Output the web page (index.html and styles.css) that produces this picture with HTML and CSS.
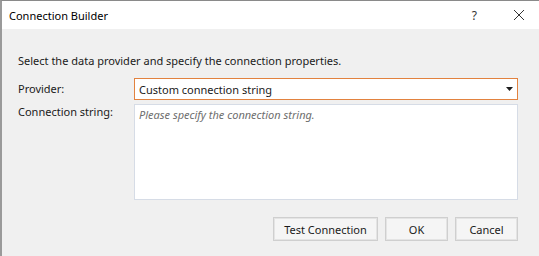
FILE: index.html
```html
<!DOCTYPE html>
<html>
<head>
<meta charset="utf-8">
<title>Connection Builder</title>
<link rel="stylesheet" href="styles.css">
</head>
<body>
<div class="window">
  <div class="titlebar">
    <span class="title">Connection Builder</span>
    <div class="controls">
      <span class="help">?</span>
      <svg class="close" width="12" height="12" viewBox="0 0 12 12"><path d="M1 1 L11 11 M11 1 L1 11" stroke="#333" stroke-width="1" fill="none"/></svg>
    </div>
  </div>
  <div class="content">
    <p class="intro">Select the data provider and specify the connection properties.</p>
    <div class="form">
      <label class="label label-provider">Provider:</label>
      <div class="combo">
        <span class="combo-text">Custom connection string</span>
        <svg class="arrow" width="7" height="4" viewBox="0 0 7 4"><path d="M0 0 H7 L3.5 4 Z" fill="#1e1e1e"/></svg>
      </div>
      <label class="label label-conn">Connection string:</label>
      <div class="textarea"><span class="placeholder">Please specify the connection string.</span></div>
    </div>
    <div class="buttons">
      <button class="btn btn-test">Test Connection</button>
      <button class="btn btn-ok">OK</button>
      <button class="btn btn-cancel">Cancel</button>
    </div>
  </div>
</div>
</body>
</html>
```
FILE: styles.css
```css
html, body {
  margin: 0;
  padding: 0;
  background: #f0f0f0;
  width: 539px;
  height: 256px;
  overflow: hidden;
}
body {
  font-family: "Noto Sans", "Segoe UI", sans-serif;
  font-size: 11px;
  color: #1a1a1a;
}
.window {
  box-sizing: border-box;
  width: 539px;
  height: 256px;
  border-left: 2px solid #9a9a9a;
  border-top: 1px solid #8a8a8a;
  background: #f0f0f0;
}
.titlebar {
  height: 28px;
  background: #ffffff;
  display: flex;
  align-items: center;
  justify-content: space-between;
  padding-left: 7px;
}
.title {
  font-size: 11px;
  color: #000;
}
.controls {
  display: flex;
  align-items: center;
  gap: 36px;
  padding-right: 14px;
}
.help {
  font-size: 12px;
  color: #333;
}
.close {
  display: block;
}
.content {
  padding: 24px 21px 0 16px;
}
.intro {
  margin: 0;
  line-height: 16px;
  height: 16px;
}
.form {
  margin-top: 9px;
  display: grid;
  grid-template-columns: 116px 1fr;
  row-gap: 4px;
}
.label {
  line-height: 16px;
}
.label-provider {
  align-self: center;
}
.label-conn {
  padding-top: 0;
}
.combo {
  box-sizing: border-box;
  height: 22px;
  border: 1px solid #e2823f;
  background: #ffffff;
  display: flex;
  align-items: center;
  justify-content: space-between;
  padding: 0 4px 0 4px;
}
.arrow {
  display: block;
}
.textarea {
  box-sizing: border-box;
  height: 96px;
  border: 1px solid #d6dce6;
  background: #ffffff;
  padding: 2px 4px;
}
.placeholder {
  font-style: italic;
  color: #6e6e6e;
}
.buttons {
  margin-top: 17px;
  display: flex;
  justify-content: flex-end;
  gap: 7px;
}
.btn {
  box-sizing: border-box;
  height: 24px;
  font-family: inherit;
  font-size: 11px;
  color: #1a1a1a;
  background: #f5f5f5;
  border: 1px solid #cfcfcf;
  box-shadow: inset 0 0 0 1px #e4e4e4;
  padding: 0;
}
.btn-test { width: 105px; }
.btn-ok { width: 63px; }
.btn-cancel { width: 63px; }
```
